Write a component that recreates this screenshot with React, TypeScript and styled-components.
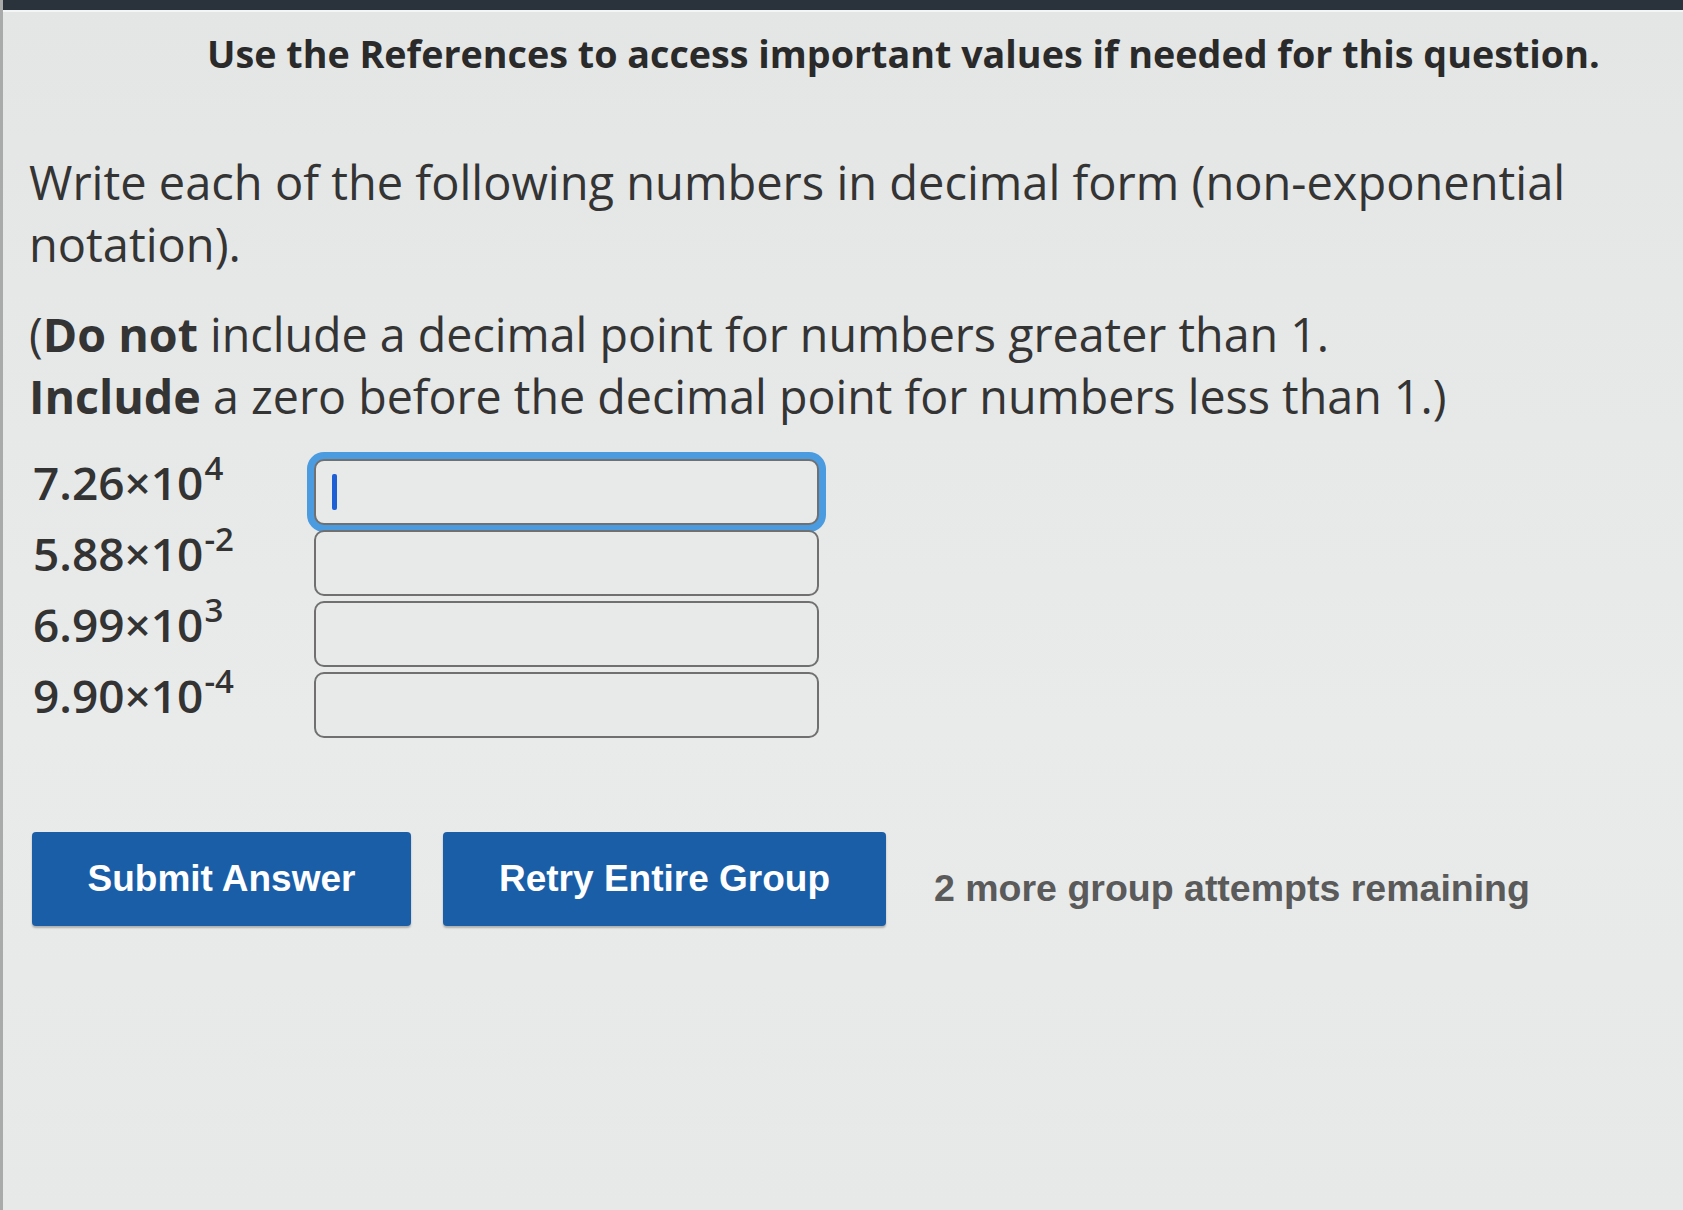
import React from 'react';
import styled, { createGlobalStyle } from 'styled-components';

const GlobalStyle = createGlobalStyle`
  html, body {
    margin: 0;
    padding: 0;
    background: #e6e7e7;
  }
  body {
    font-family: "Open Sans", "Noto Sans", sans-serif;
    color: #2b2b2b;
  }
`;

const Screen = styled.div`
  min-height: 1210px;
  background: linear-gradient(180deg, #e4e5e5 0%, #e9eaea 60%, #e7e8e8 100%);
  border-left: 3px solid #a9abab;
  box-sizing: border-box;
`;

const TopBar = styled.div`
  height: 10px;
  background: #2a323b;
  border-bottom: 2px solid #f4f6f6;
`;

const Content = styled.div`
  padding: 17px 0 0 26px;
`;

const Notice = styled.h2`
  margin: 0 0 0 178px;
  font-size: 37.7px;
  line-height: 50px;
  font-weight: 700;
  color: #2a2a2a;
  white-space: nowrap;
`;

const Paragraph = styled.p<{ top: number; size: number }>`
  margin: ${p => p.top}px 0 0 0;
  font-size: ${p => p.size}px;
  line-height: 62px;
  font-weight: 400;
  color: #343434;
  max-width: 1590px;
`;

const Rows = styled.div`
  margin-top: 29px;
  display: grid;
  grid-template-columns: 285px 505px;
  grid-auto-rows: 71px;
  align-items: center;
`;

const Expr = styled.div`
  font-size: 46px;
  font-weight: 600;
  color: #333;
  padding-left: 4px;
  margin-top: -20px;
  sup {
    font-size: 33px;
    font-weight: 600;
    vertical-align: 0;
    position: relative;
    top: -20px;
    margin-left: 1px;
  }
`;

const Field = styled.div<{ focused?: boolean }>`
  position: relative;
  height: 66px;
  border: 2px solid #707070;
  border-radius: 10px;
  background: #e8e9e9;
  box-sizing: border-box;
  box-shadow: ${p => (p.focused ? '0 0 0 7px #4b9be0' : 'none')};
`;

const Caret = styled.span`
  position: absolute;
  left: 16px;
  top: 13px;
  width: 5px;
  height: 36px;
  background: #1f5fd6;
  border-radius: 2px;
`;

const Actions = styled.div`
  margin-top: 92px;
  display: flex;
  align-items: center;
  gap: 32px;
  padding-left: 3px;
`;

const Button = styled.button<{ w: number }>`
  width: ${p => p.w}px;
  height: 94px;
  background: #1a5ea8;
  color: #fff;
  border: none;
  border-radius: 4px;
  font-family: "Liberation Sans", Arial, sans-serif;
  font-weight: 700;
  font-size: 37px;
  box-shadow: 0 2px 2px rgba(0, 0, 0, 0.25);
  cursor: pointer;
`;

const Attempts = styled.span`
  margin-left: 16px;
  margin-top: 18px;
  font-family: "Liberation Sans", Arial, sans-serif;
  font-weight: 700;
  font-size: 37.5px;
  color: #5a5a5a;
`;

const items = [
  { base: '7.26×10', exp: '4' },
  { base: '5.88×10', exp: '-2' },
  { base: '6.99×10', exp: '3' },
  { base: '9.90×10', exp: '-4' },
];

const App = () => (
  <>
    <GlobalStyle />
    <Screen>
      <TopBar />
      <Content>
        <Notice>Use the References to access important values if needed for this question.</Notice>
        <Paragraph top={72} size={47}>
          Write each of the following numbers in decimal form (non-exponential notation).
        </Paragraph>
        <Paragraph top={28} size={46.6}>
          (<b>Do not</b> include a decimal point for numbers greater than 1.
          <br />
          <b>Include</b> a zero before the decimal point for numbers less than 1.)
        </Paragraph>
        <Rows>
          {items.map((it, i) => (
            <React.Fragment key={it.base + it.exp}>
              <Expr>
                {it.base}
                <sup>{it.exp}</sup>
              </Expr>
              <Field focused={i === 0}>{i === 0 && <Caret />}</Field>
            </React.Fragment>
          ))}
        </Rows>
        <Actions>
          <Button w={379}>Submit Answer</Button>
          <Button w={443}>Retry Entire Group</Button>
          <Attempts>2 more group attempts remaining</Attempts>
        </Actions>
      </Content>
    </Screen>
  </>
);

export default App;
